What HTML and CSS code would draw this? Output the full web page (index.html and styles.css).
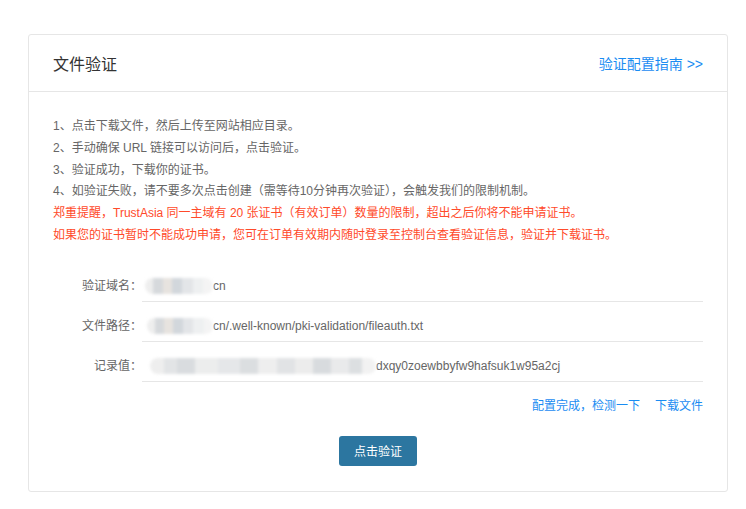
FILE: index.html
```html
<!DOCTYPE html>
<html lang="zh-CN">
<head>
<meta charset="utf-8">
<title>文件验证</title>
<link rel="stylesheet" href="styles.css">
</head>
<body>
<div class="card">
  <div class="card-head">
    <h2 class="title">文件验证</h2>
    <a class="guide" href="#">验证配置指南 &gt;&gt;</a>
  </div>
  <div class="card-body">
    <ul class="notes">
      <li>1、点击下载文件，然后上传至网站相应目录。</li>
      <li>2、手动确保 URL 链接可以访问后，点击验证。</li>
      <li>3、验证成功，下载你的证书。</li>
      <li>4、如验证失败，请不要多次点击创建（需等待10分钟再次验证），会触发我们的限制机制。</li>
      <li class="warn">郑重提醒，TrustAsia 同一主域有 20 张证书（有效订单）数量的限制，超出之后你将不能申请证书。</li>
      <li class="warn">如果您的证书暂时不能成功申请，您可在订单有效期内随时登录至控制台查看验证信息，验证并下载证书。</li>
    </ul>
    <div class="fields">
      <div class="field">
        <span class="label">验证域名：</span>
        <span class="value"><span class="blur blur-a"></span>cn</span>
      </div>
      <div class="field">
        <span class="label">文件路径：</span>
        <span class="value"><span class="blur blur-b"></span>cn/.well-known/pki-validation/fileauth.txt</span>
      </div>
      <div class="field">
        <span class="label">记录值：</span>
        <span class="value"><span class="blur blur-c"></span>dxqy0zoewbbyfw9hafsuk1w95a2cj</span>
      </div>
    </div>
    <div class="actions">
      <a href="#">配置完成，检测一下</a>
      <a href="#">下载文件</a>
    </div>
    <div class="btn-row">
      <button class="btn">点击验证</button>
    </div>
  </div>
</div>
</body>
</html>
```
FILE: styles.css
```css
html, body {
  margin: 0;
  padding: 0;
  background: #fff;
}
body {
  padding: 34px 19px 18px 28px;
  font-family: "Liberation Sans", "Noto Sans CJK SC", sans-serif;
  font-size: 12px;
  color: #666;
}
.card {
  width: 698px;
  border: 1px solid #e6e6e6;
  border-radius: 3px;
}
.card-head {
  height: 56px;
  border-bottom: 1px solid #e6e6e6;
  display: flex;
  align-items: center;
  justify-content: space-between;
  padding: 0 24px;
}
.title {
  margin: 0;
  font-size: 16px;
  font-weight: normal;
  color: #333;
}
.guide {
  color: #1a8cf2;
  text-decoration: none;
  font-size: 14px;
}
.card-body {
  padding: 24px 24px 25px 24px;
}
.notes {
  list-style: none;
  margin: 0;
  padding: 0;
  line-height: 21.8px;
}
.warn {
  color: #ff4a2a;
}
.fields {
  margin-top: 15px;
}
.field {
  display: flex;
  height: 40px;
}
.label {
  width: 89px;
  text-align: right;
  padding-top: 15px;
  line-height: 18px;
  white-space: nowrap;
}
.value {
  flex: 1;
  border-bottom: 1px solid #e6e6e6;
  padding: 15px 0 6px 3px;
  line-height: 18px;
  display: flex;
  align-items: center;
  height: 18px;
  color: #666;
}
.blur {
  display: inline-block;
  height: 16px;
  border-radius: 8px;
  filter: blur(1.5px);
  background: linear-gradient(to right,
    #eeeeee 0 12%, #d6d9dc 12% 26%, #e7e3df 26% 40%, #d2d7dc 40% 54%,
    #e3e5e8 54% 70%, #eef0f1 70% 86%, #f4f4f4 86% 100%);
}
.blur-a { width: 68px; margin-left: 0; }
.blur-b { width: 66px; margin-left: 2px; }
.blur-c {
  width: 226px;
  margin-left: 5px;
  background: linear-gradient(to right,
    #eeeeee 0 6%, #e2e4e6 6% 12%, #d9dcdf 12% 20%, #eceded 20% 30%,
    #e5e7e9 30% 40%, #dbdee0 40% 48%, #eeeeee 48% 56%, #e1e3e5 56% 64%,
    #ececec 64% 72%, #d8dbde 72% 80%, #e9eaeb 80% 88%, #dcdfe1 88% 94%, #f2f2f2 94% 100%);
}
.actions {
  display: flex;
  justify-content: flex-end;
  gap: 15px;
  padding-top: 15px;
  line-height: 18px;
}
.actions a {
  color: #1a8cf2;
  text-decoration: none;
}
.btn-row {
  display: flex;
  justify-content: center;
  margin-top: 21px;
}
.btn {
  width: 78px;
  height: 30px;
  border: none;
  border-radius: 3px;
  background: #2c76a0;
  color: #fff;
  font-family: "Liberation Sans", "Noto Sans CJK SC", sans-serif;
  font-size: 12px;
  padding: 0;
}
```
